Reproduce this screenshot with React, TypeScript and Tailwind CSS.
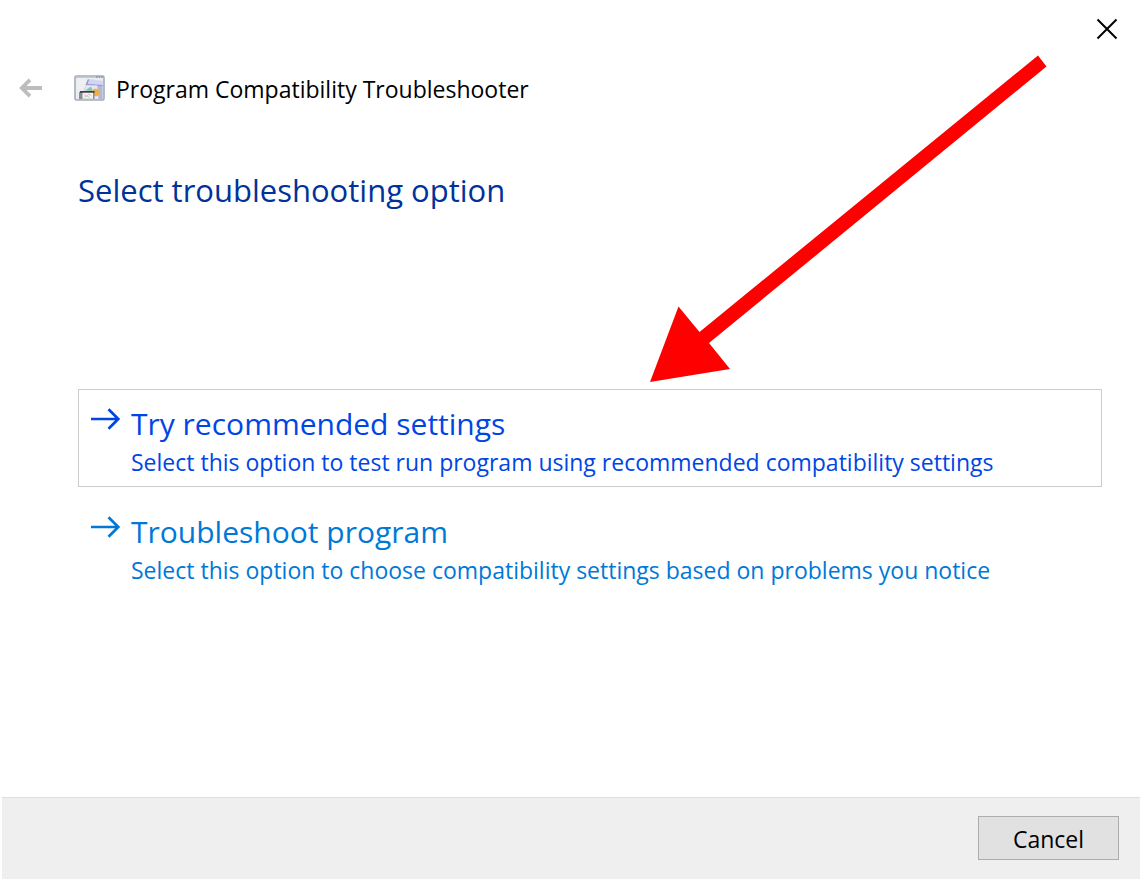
function CloseIcon() {
  return (
    <svg width="22" height="22" viewBox="0 0 22 22" fill="none" stroke="#000" strokeWidth="2" aria-hidden="true">
      <path d="M1.5 1.5 L20.5 20.5 M20.5 1.5 L1.5 20.5" />
    </svg>
  );
}

function BackIcon() {
  return (
    <svg width="24" height="20" viewBox="0 0 24 20" fill="none" stroke="#bdbdbd" strokeWidth="3.8" aria-hidden="true">
      <path d="M2.5 10 H23 M11 1.8 L2.8 10 L11 18.2" />
    </svg>
  );
}

function ProgramIcon() {
  return (
    <svg width="32" height="26" viewBox="0 0 32 26" aria-hidden="true">
      <rect x="1" y="1" width="29" height="24" rx="1.5" fill="#e9edf2" stroke="#a3acb5" strokeWidth="1.6" />
      <path d="M2 2 H29" stroke="#b6bec9" strokeWidth="1.4" />
      <path d="M22 2 h1.5 M24.6 2 h1.5 M27.2 2 h1.5" stroke="#6f7a88" strokeWidth="1.1" />
      <path d="M2.5 4 H14 L9 15 H2.5 Z" fill="#eeeff1" />
      <path d="M14 4 L29 6 L28.5 24 H12 L9.5 14 Z" fill="#d8d9f1" />
      <path d="M14.5 4.5 L29 6 L28.5 10 L12.5 9 Z" fill="#d3d4f2" />
      <path d="M14.5 4.5 L12.5 9.5 L28.5 10.5" stroke="#8d8fc0" strokeWidth="1.2" fill="none" />
      <path d="M11.5 10.5 H23 L25 24 H12 Z" fill="#e4e5f7" />
      <path d="M23.5 11 H28.5 V24 H24.5 Z" fill="#b5b7da" />
      <circle cx="21.5" cy="17.5" r="3.8" fill="#f0b040" />
      <path d="M11 15.5 L17 11.5 L19 16.5 Z" fill="#8bc6a2" />
      <path d="M5 17.5 L7 16 H20.5 V24 H5 Z" fill="#8b8d90" />
      <path d="M6 16 H20.5 V17.8 H6 Z" fill="#3d3f41" />
      <rect x="8.5" y="17.8" width="10.5" height="6" fill="#f4f6f4" />
      <path d="M10 19.5 L12.5 21 L15 19 L17.5 21" stroke="#dcaec8" strokeWidth="0.9" fill="none" />
      <path d="M10 22.5 L13 21 L16 22.5" stroke="#a8d6b0" strokeWidth="0.9" fill="none" />
    </svg>
  );
}

function GoIcon() {
  return (
    <svg width="30" height="22" viewBox="0 0 30 22" fill="none" stroke="currentColor" strokeWidth="2.7" aria-hidden="true">
      <path d="M0 11 H28 M17.5 1.2 L27.3 11 L17.5 20.8" />
    </svg>
  );
}

function Option({ title, text, selected }: { title: string; text: string; selected?: boolean }) {
  return (
    <button
      type="button"
      className={
        selected
          ? "flex h-[98px] w-full items-start gap-[10px] border border-[#cccccc] px-3 pt-3 text-left text-[#0046e4]"
          : "flex h-[98px] w-full items-start gap-[10px] border border-transparent px-3 pt-3 text-left text-[#0078d7]"
      }
    >
      <span className="shrink-0 pt-[6px]">
        <GoIcon />
      </span>
      <span className="flex flex-col whitespace-nowrap">
        <span className="text-[30px] leading-[44px]">{title}</span>
        <span className="text-[23px] leading-8">{text}</span>
      </span>
    </button>
  );
}

export default function App() {
  return (
    <div className="relative flex min-h-screen flex-col bg-white px-[2px] pb-[2px] font-['Open_Sans','Noto_Sans',sans-serif] text-black">
      <header>
        <div className="flex h-[58px] items-center justify-end pr-[22px]">
          <button type="button" aria-label="Close">
            <CloseIcon />
          </button>
        </div>
        <div className="flex h-[60px] items-center pl-[17px]">
          <button type="button" aria-label="Back" disabled>
            <BackIcon />
          </button>
          <span className="ml-[31px]">
            <ProgramIcon />
          </span>
          <span className="ml-[10px] pt-[2px] text-[23px] leading-8 whitespace-nowrap">Program Compatibility Troubleshooter</span>
        </div>
      </header>
      <main className="flex-1 pr-[38px] pl-[76px]">
        <h1 className="mt-[50px] text-[31px] leading-[44px] whitespace-nowrap text-[#003399]">Select troubleshooting option</h1>
        <div className="mt-[177px] flex flex-col gap-[10px]">
          <Option title="Try recommended settings" text="Select this option to test run program using recommended compatibility settings" selected />
          <Option title="Troubleshoot program" text="Select this option to choose compatibility settings based on problems you notice" />
        </div>
      </main>
      <footer className="flex h-[82px] items-start justify-end border-t border-[#dfdfdf] bg-[#efefef] pt-[18px] pr-[21px]">
        <button type="button" className="h-11 w-[141px] border border-[#adadad] bg-[#e1e1e1] pt-[2px] text-[23px] leading-8">
          Cancel
        </button>
      </footer>
      <svg
        className="pointer-events-none absolute top-[55px] left-[650px]"
        width="398"
        height="328"
        viewBox="0 0 398 328"
        aria-hidden="true"
      >
        <path d="M0 327 L28.5 251.5 L49.5 277 L388 0.5 L396.5 11.5 L59 288 L80 314 Z" fill="#ff0000" />
      </svg>
    </div>
  );
}
